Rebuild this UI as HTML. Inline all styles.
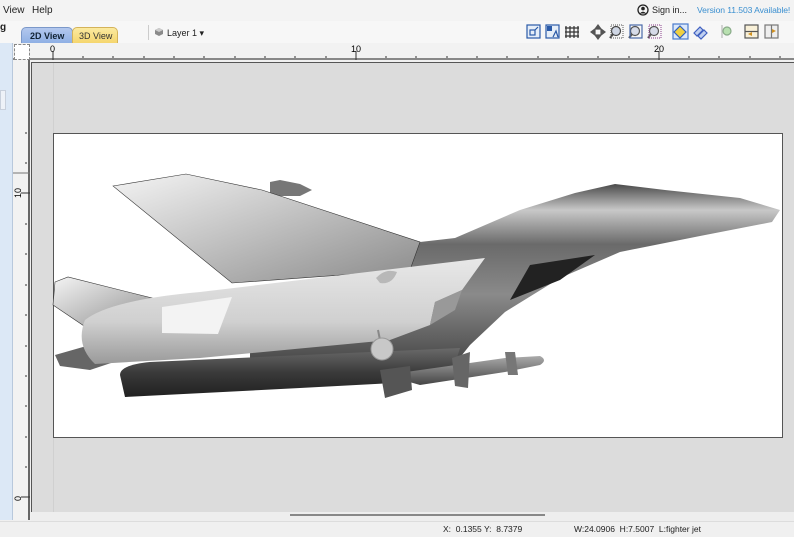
<!DOCTYPE html>
<html><head><meta charset="utf-8"><style>
*{margin:0;padding:0;box-sizing:border-box}
body{width:794px;height:537px;overflow:hidden;background:#f0f0f0;font-family:"Liberation Sans",sans-serif;font-size:9px;color:#222;position:relative}
.a{position:absolute;white-space:nowrap}
</style></head><body>
<div class="a" style="left:0;top:0;width:794px;height:21px;background:#f3f3f3"></div>
<div class="a" style="left:3px;top:5px;font-size:10px">View</div>
<div class="a" style="left:32px;top:5px;font-size:10px">Help</div>
<svg class="a" style="left:637px;top:4px" width="12" height="12"><circle cx="6" cy="6" r="5" fill="none" stroke="#222" stroke-width="1.3"/><circle cx="6" cy="4.6" r="1.8" fill="#222"/><path d="M2.8 9.5 Q6 5.8 9.2 9.5Z" fill="#222"/></svg>
<div class="a" style="left:652px;top:5px;font-size:9px">Sign in...</div>
<div class="a" style="left:697px;top:5px;font-size:8.6px;color:#3a8fd0;letter-spacing:-0.1px">Version 11.503 Available!</div>
<div class="a" style="left:0;top:21px;width:794px;height:22px;background:#f7f7f7"></div>
<div class="a" style="left:0;top:22px;font-weight:bold;font-size:10px">g</div>
<div class="a" style="left:21px;top:27px;width:52px;height:16px;background:linear-gradient(#b3c8ee,#8fb0e4);border:1px solid #7b98c9;border-bottom:none;border-radius:5px 5px 0 0;font-size:9px;font-weight:bold;color:#123;padding:3px 0 0 8px">2D View</div>
<div class="a" style="left:72px;top:27px;width:46px;height:16px;background:linear-gradient(#fbeaa0,#f5d66e);border:1px solid #d4b35a;border-bottom:none;border-radius:5px 5px 0 0;font-size:9px;color:#333;padding:3px 0 0 6px">3D View</div>
<div class="a" style="left:148px;top:25px;width:1px;height:15px;background:#ccc"></div>
<svg class="a" style="left:154px;top:27px" width="10" height="10"><path d="M5 1 L9 3 L9 7 L5 9 L1 7 L1 3Z" fill="#8a8a8a"/><path d="M5 1 L9 3 L5 5 L1 3Z" fill="#ccc"/></svg>
<div class="a" style="left:167px;top:28px;font-size:9px">Layer 1 ▾</div>
<svg class="a" style="left:520px;top:22px" width="274" height="20">
<g fill="none" stroke-width="1.2">
<rect x="7" y="3" width="13" height="13" fill="#e6eef8" stroke="#2a5aa8"/><rect x="10" y="8" width="5" height="5" stroke="#2a5aa8"/><path d="M15 8 L18 5" stroke="#2a5aa8"/>
<rect x="26" y="3" width="13" height="13" fill="#e6eef8" stroke="#2a5aa8"/><rect x="27" y="4" width="5" height="5" fill="#2a5aa8"/><path d="M33 15 L36 9 L38 15" stroke="#2a5aa8"/>
<path d="M46 4V16M50 4V16M54 4V16M58 4V16M45 6H59M45 10H59M45 14H59" stroke="#333"/>
<path d="M78 3 L81 7 L75 7Z M78 17 L81 13 L75 13Z M71 10 L75 7 L75 13Z M85 10 L81 7 L81 13Z" fill="#555" stroke="#555"/>
<circle cx="96" cy="9" r="4.5" stroke="#444" fill="#cfd6e4"/><path d="M93 12 L90 16" stroke="#444" stroke-width="2"/><rect x="91" y="3" width="12" height="13" stroke="#777" stroke-dasharray="1 1"/>
<circle cx="115" cy="9" r="4.5" stroke="#555" fill="#d6dbe8"/><path d="M112 12 L109 16" stroke="#555" stroke-width="2"/><rect x="110" y="3" width="12" height="13" stroke="#4a6aaa"/>
<circle cx="134" cy="9" r="4.5" stroke="#555" fill="#d6dbe8"/><path d="M131 12 L128 16" stroke="#555" stroke-width="2"/><rect x="129" y="3" width="12" height="13" stroke="#a060a0" stroke-dasharray="1 1"/>
<rect x="153" y="2" width="15" height="15" fill="#dbe8fa" stroke="#4a7acc"/><path d="M160 4 L166 10 L160 16 L154 10Z" fill="#f0d040" stroke="#3060c0"/>
<path d="M174 11 L180 5 L183 8 L177 14Z M178 14 L184 8 L187 11 L181 17Z" stroke="#4060c0" fill="#c0d0f0"/>
<path d="M202 3 V16" stroke="#bbb"/><circle cx="207" cy="9" r="4" fill="#b8e0b0" stroke="#8a8"/>
<rect x="225" y="3" width="13" height="13" fill="#f8f0d8" stroke="#555"/><path d="M225 9.5H238" stroke="#555"/><path d="M228 12 L232 10 L232 14Z" fill="#d09020"/>
<rect x="245" y="3" width="13" height="13" fill="#eee" stroke="#777"/><path d="M251.5 3V16" stroke="#777"/><path d="M256 9 L252 7 L252 11Z" fill="#d09020"/>
</g></svg>
<div class="a" style="left:0;top:43px;width:13px;height:477px;background:#dce8f6;border-right:1px solid #b8c8dc"></div>
<div class="a" style="left:0;top:90px;width:6px;height:20px;background:#eef2f8;border:1px solid #c8d0dc"></div>
<div class="a" style="left:13px;top:43px;width:781px;height:17px;background:#f2f2f2;border-bottom:2px solid #888"></div>
<div class="a" style="left:14px;top:44px;width:16px;height:16px;border:1px dashed #888;background:#fff"></div>
<svg class="a" style="left:30px;top:43px" width="764" height="17">
<g stroke="#333" stroke-width="1">
<path d="M23 8V17M326 8V17M629 8V17"/>
<path d="M53 13V15M83 13V15M114 13V15M144 13V15M174 13V15M205 13V15M235 13V15M265 13V15M296 13V15M356 13V15M386 13V15M417 13V15M447 13V15M477 13V15M508 13V15M538 13V15M568 13V15M599 13V15M659 13V15M689 13V15M720 13V15M750 13V15"/>
</g>
<text x="20" y="9" font-size="9" font-family="Liberation Sans">0</text>
<text x="321" y="9" font-size="9" font-family="Liberation Sans">10</text>
<text x="624" y="9" font-size="9" font-family="Liberation Sans">20</text>
</svg>
<div class="a" style="left:13px;top:60px;width:17px;height:460px;background:#f2f2f2;border-right:2px solid #666"></div>
<svg class="a" style="left:13px;top:60px" width="17" height="460">
<g stroke="#333"><path d="M13 72V74M13 102V104M13 163V165M13 193V195M13 224V226M13 254V256M13 285V287M13 315V317M13 345V347M13 376V378M13 406V408M13 467V469M8 133H17M8 437H17"/></g>
<path d="M0 113H17" stroke="#777"/>
<text x="8" y="138" font-size="9" font-family="Liberation Sans" transform="rotate(-90 8 138)">10</text>
<text x="8" y="441" font-size="9" font-family="Liberation Sans" transform="rotate(-90 8 441)">0</text>
</svg>
<div class="a" style="left:31px;top:62px;width:763px;height:450px;background:#dcdcdc;border-left:1px solid #555;border-top:1px solid #555"></div>
<div class="a" style="left:53px;top:63px;width:1px;height:449px;background:#d0d0d0"></div>
<div class="a" style="left:53px;top:133px;width:730px;height:305px;background:#fff;border:1px solid #555"></div>
<svg class="a" style="left:0;top:0" width="794" height="537">
<defs>
<linearGradient id="w" x1="0" y1="0" x2="1" y2="1"><stop offset="0" stop-color="#f4f4f4"/><stop offset="1" stop-color="#8a8a8a"/></linearGradient>
<linearGradient id="b" gradientUnits="userSpaceOnUse" x1="0" y1="184" x2="0" y2="385"><stop offset="0" stop-color="#4a4a4a"/><stop offset=".13" stop-color="#c8c8c8"/><stop offset=".3" stop-color="#6a6a6a"/><stop offset=".55" stop-color="#8a8a8a"/><stop offset="1" stop-color="#333"/></linearGradient>
<linearGradient id="e" x1="0" y1="0" x2="0" y2="1"><stop offset="0" stop-color="#e8e8e8"/><stop offset=".6" stop-color="#d0d0d0"/><stop offset="1" stop-color="#9a9a9a"/></linearGradient>
<linearGradient id="d" x1="0" y1="0" x2="0" y2="1"><stop offset="0" stop-color="#6a6a6a"/><stop offset=".5" stop-color="#3a3a3a"/><stop offset="1" stop-color="#202020"/></linearGradient>
<linearGradient id="m" x1="0" y1="0" x2="0" y2="1"><stop offset="0" stop-color="#aaa"/><stop offset="1" stop-color="#444"/></linearGradient>
</defs>
<path d="M270 182 L280 180 L300 184 L312 190 L300 196 L270 196Z" fill="#777"/>
<path d="M420 242 L455 238 L520 210 L575 193 L615 184 L665 190 L740 198 L780 210 L772 222 L700 236 L620 252 L560 278 L505 312 L470 345 L450 370 L400 380 L250 385 L250 330 L300 290 L400 255Z" fill="url(#b)"/>
<path d="M113 186 L186 174 L262 190 L420 242 L410 270 L232 283 Z" fill="url(#w)" stroke="#333" stroke-width=".6"/>
<path d="M530 265 L595 255 L560 280 L510 300Z" fill="#222"/>
<path d="M55 355 L90 345 L120 360 L90 370 L60 366Z" fill="#666"/>
<path d="M120 375 Q120 365 150 362 L460 348 L450 380 L300 388 L125 397Z" fill="url(#d)"/>
<path d="M55 282 L68 277 L160 300 L90 330 L53 305Z" fill="url(#w)" stroke="#333" stroke-width=".6"/>
<path d="M85 320 Q110 300 200 292 L485 258 L462 290 L435 302 L430 325 L390 340 L200 358 L95 364 Q75 345 85 320Z" fill="url(#e)"/>
<path d="M435 302 L462 290 L455 310 L430 325Z" fill="#999"/>
<path d="M162 307 L232 297 L218 334 L162 333Z" fill="#f3f3f3"/>
<path d="M376 278 Q385 268 397 272 Q392 285 380 283Z" fill="#b8b8b8"/>
<path d="M378 330 L380 340" stroke="#888" stroke-width="2"/>
<circle cx="382" cy="349" r="11" fill="#c8c8c8" stroke="#999"/>
<path d="M385 375 L505 358 L540 356 Q548 360 540 365 L505 372 L420 385 Z" fill="url(#m)"/>
<path d="M380 370 L410 366 L412 390 L385 398Z" fill="#555"/>
<path d="M452 358 L470 352 L468 388 L455 386Z" fill="#666"/>
<path d="M505 352 L515 352 L518 375 L508 375Z" fill="#777"/>
</svg>
<div class="a" style="left:31px;top:512px;width:763px;height:9px;background:#eee"></div>
<div class="a" style="left:290px;top:514px;width:255px;height:2px;background:#888"></div>
<div class="a" style="left:0;top:521px;width:794px;height:16px;background:#f0f0f0;border-top:1px solid #ddd"></div>
<div class="a" style="left:443px;top:524px;font-size:8.5px">X:&nbsp; 0.1355 Y:&nbsp; 8.7379</div>
<div class="a" style="left:574px;top:524px;font-size:8.5px">W:24.0906&nbsp; H:7.5007&nbsp; L:fighter jet</div>
</body></html>
